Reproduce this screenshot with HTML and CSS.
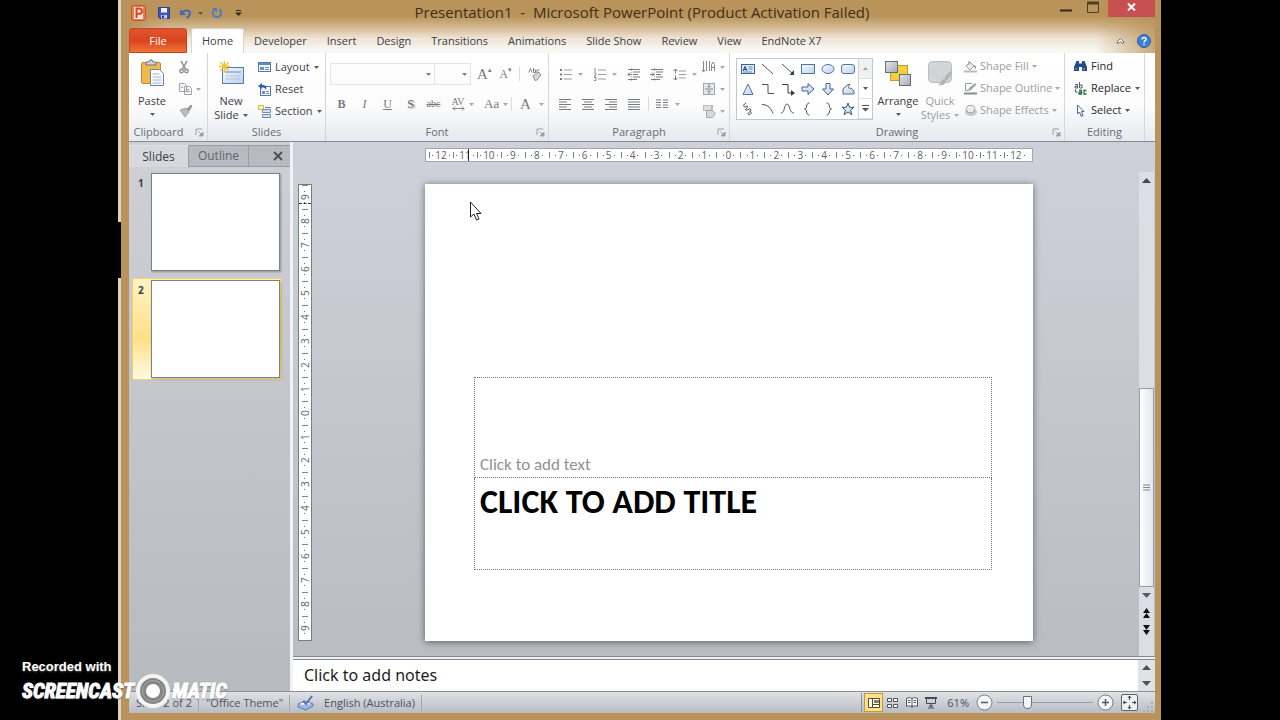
FILE: index.html
```html
<!DOCTYPE html>
<html lang="en">
<head>
<meta charset="utf-8">
<title>Presentation1 - Microsoft PowerPoint</title>
<link rel="stylesheet" href="styles.css">
</head>
<body>
<svg class="defs" aria-hidden="true">
  <defs>
    <linearGradient id="blue" x1="0" y1="0" x2="1" y2="1"><stop offset="0" stop-color="#f4f9fe"/><stop offset="1" stop-color="#bcd3ea"/></linearGradient>
    <linearGradient id="steel" x1="0" y1="0" x2="1" y2="1"><stop offset="0" stop-color="#e6e8ea"/><stop offset="1" stop-color="#a4a9b0"/></linearGradient>
    <symbol id="caret" viewBox="0 0 5 3"><path d="M0 0h5L2.500 3z" fill="currentColor"/></symbol>
    <symbol id="launch" viewBox="0 0 9 9"><path d="M1 7V1h6M3.500 3.500l3 3M8 4v4H4z" fill="none" stroke="#9aa0a8"/><path d="M8 4.500V8H4.500z" fill="#9aa0a8"/></symbol>
  </defs>
</svg>
<div class="desktop">
  <div class="window">
    <header class="chrome">
      <div class="titlebar">
        <div class="quick">
          <svg width="15" height="16" viewBox="0 0 15 16"><rect x=".5" y=".5" width="14" height="15" rx="2" fill="#ee7a50" stroke="#c9532c"/><rect x="3" y="2" width="9" height="12" fill="#fbe9df"/><path d="M5.500 13V3.500h2.800a2.600 2.600 0 0 1 0 5.300H5.500" fill="none" stroke="#d9461c" stroke-width="2"/></svg>
          <button class="plain save" aria-label="Save"><svg width="12" height="12" viewBox="0 0 12 12"><path d="M.5.5h11v11H2L.5 10z" fill="#4355b8" stroke="#303c8c"/><path d="M3 1h6v4.500H3z" fill="#eef1fb"/><path d="M3 8h6v3.500H3z" fill="#c7cdea"/><path d="M4 8.500h2V11H4z" fill="#2b3683"/></svg></button>
          <button class="plain undo" aria-label="Undo"><svg width="12" height="11" viewBox="0 0 12 11"><path d="M2 4.500C5 1.500 10 2 10 5.500c0 2-1.500 3.500-3.500 4.500" fill="none" stroke="#4169b8" stroke-width="2"/><path d="M0 1v6h6z" fill="#4169b8"/></svg><svg class="c" width="5" height="3"><use href="#caret"/></svg></button>
          <button class="plain redo" aria-label="Repeat"><svg width="12" height="12" viewBox="0 0 12 12"><path d="M3 3C1 5 1.500 8.500 4 9.700c3 1.300 6.500-.7 6.200-4C10 4 9 3 8 2.500" fill="none" stroke="#4b7cc9" stroke-width="2"/><path d="M1 1h5v5z" fill="#4b7cc9"/></svg></button>
          <button class="plain more" aria-label="Customize toolbar"><svg width="7" height="6" viewBox="0 0 7 6"><path d="M1 .5h5" stroke="#33291b"/><path d="M0 2.500h7L3.500 6z" fill="#33291b"/></svg></button>
        </div>
        <h1>Presentation1&nbsp; - &nbsp;Microsoft PowerPoint (Product Activation Failed)</h1>
        <div class="controls">
          <button class="plain" aria-label="Minimize"><svg width="12" height="12" viewBox="0 0 12 12"><path d="M0 9.500h12" stroke="#33291b" stroke-width="2"/></svg></button>
          <button class="plain" aria-label="Maximize"><svg width="12" height="12" viewBox="0 0 12 12"><path d="M.5 1v10.500h11V1" fill="none" stroke="#4d4125"/><path d="M0 2h12" stroke="#4d4125" stroke-width="3"/></svg></button>
          <button class="plain close" aria-label="Close"><svg width="9" height="8" viewBox="0 0 9 8"><path d="M1 .5l7 7M8 .5l-7 7" stroke="#fff" stroke-width="2"/></svg></button>
        </div>
      </div>
      <nav class="tabs">
        <button class="file">File</button>
        <button class="tab on">Home</button>
        <button class="tab">Developer</button>
        <button class="tab">Insert</button>
        <button class="tab">Design</button>
        <button class="tab">Transitions</button>
        <button class="tab">Animations</button>
        <button class="tab">Slide Show</button>
        <button class="tab">Review</button>
        <button class="tab">View</button>
        <button class="tab">EndNote X7</button>
        <div class="help">
          <button class="plain" aria-label="Minimize the ribbon"><svg width="9" height="7" viewBox="0 0 9 7"><path d="M1 5l3.500-3.500L8 5v1H6L4.500 4.500 3 6H1z" fill="#fff" stroke="#6b6a66"/></svg></button>
          <button class="plain" aria-label="Help"><svg width="14" height="14" viewBox="0 0 14 14"><circle cx="7" cy="7" r="6.500" fill="#3c7fd6" stroke="#2a5ca6"/><path d="M5 5.500C5 2.800 9.200 3 9 5.500 8.900 6.800 7 6.800 7 8.500M7 9.700v1.500" fill="none" stroke="#fff" stroke-width="1.500"/></svg></button>
        </div>
      </nav>
    </header>

    <div class="ribbon">
      <section class="group">
        <div class="body clip">
          <button class="big"><svg width="26" height="28" viewBox="0 0 26 28"><rect x="2.500" y="3.500" width="19" height="21" rx="1.500" fill="#f0b94d" stroke="#c48b2a"/><path d="M7 5V3h3l1-2h2l1 2h3v3H7z" fill="#d3d6da" stroke="#6c7178"/><path d="M11.500 10.500h9l4 4v12h-13z" fill="#fff" stroke="#6884b5"/><path d="M13.500 15h7M13.500 18h9M13.500 21h9M13.500 24h9" stroke="#9bb0d5"/></svg><span>Paste</span><svg class="c" width="5" height="3"><use href="#caret"/></svg></button>
          <div class="stack dim">
            <button class="plain" aria-label="Cut"><svg width="10" height="13" viewBox="0 0 10 13"><path d="M2 0l4.500 8M8 0L3.500 8" stroke="#898e94" stroke-width="1.500"/><circle cx="2.500" cy="10" r="1.700" fill="none" stroke="#898e94" stroke-width="1.400"/><circle cx="7.500" cy="10" r="1.700" fill="none" stroke="#898e94" stroke-width="1.400"/></svg></button>
            <button class="plain" aria-label="Copy"><svg width="13" height="12" viewBox="0 0 13 12"><path d="M.5.500h5l2 2v6h-7zM5.500 3.500h5l2 2v6h-7z" fill="#f3f4f5" stroke="#a1a5aa"/><path d="M7 6.500h3M7 8.500h4M2 4.500h2" stroke="#a1a5aa"/></svg><svg class="c" width="5" height="3"><use href="#caret"/></svg></button>
            <button class="plain" aria-label="Format Painter"><svg width="14" height="12" viewBox="0 0 14 12"><path d="M1 5l6-2 3 4-4 5z" fill="#b9bcc0" stroke="#a2a5aa"/><path d="M8 4l4-4 1 1-3 5z" fill="#96999e" stroke="#96999e"/></svg></button>
          </div>
        </div>
        <footer>Clipboard<svg width="9" height="9"><use href="#launch"/></svg></footer>
      </section>

      <section class="group">
        <div class="body">
          <button class="big"><svg width="26" height="28" viewBox="0 0 26 28"><rect x="4.500" y="8.500" width="21" height="16" fill="url(#blue)" stroke="#6079ad"/><rect x="7" y="12" width="16" height="2" fill="#a4b8da"/><path d="M8 17h14M8 20h14" stroke="#b5c5e0"/><path d="M6.500 2v11M1 7.500h11M2.500 3.500l8 8M10.500 3.500l-8 8" stroke="#edc734" stroke-width="1.600"/></svg><span>New</span><span>Slide <svg class="c" width="5" height="3"><use href="#caret"/></svg></span></button>
          <div class="list">
            <button class="line"><svg width="13" height="12" viewBox="0 0 13 12"><rect x=".5" y="1.500" width="12" height="9" fill="#f3f8fe" stroke="#5a77ac"/><rect x="1" y="2" width="11" height="2" fill="#5a8acb"/><path d="M2 6h4v3H2z" fill="#6e92c7"/><path d="M7 6.500h4M7 8.500h4" stroke="#6e92c7"/></svg>Layout <svg class="c" width="5" height="3"><use href="#caret"/></svg></button>
            <button class="line"><svg width="13" height="13" viewBox="0 0 13 13"><rect x="2.500" y="3.500" width="10" height="9" fill="#f3f8fe" stroke="#5a77ac"/><path d="M4 8h3v3H4z" fill="#6e92c7"/><path d="M8 8.500h3M8 10.500h3" stroke="#6e92c7"/><path d="M0 3l4-3v2c4 0 5 2 4 5C7.500 5 6 4.500 4 4.500V6z" fill="#2c60ae"/></svg>Reset</button>
            <button class="line"><svg width="13" height="14" viewBox="0 0 13 14"><path d="M.5 1.500h5v4h-5z" fill="#fff4b2" stroke="#dfb730"/><path d="M7 3.500h6" stroke="#6c7c98"/><path d="M4.500 5.500h8v3h-8zM4.500 10.500h8v3h-8z" fill="#d6e4f5" stroke="#7287ac"/></svg>Section <svg class="c" width="5" height="3"><use href="#caret"/></svg></button>
          </div>
        </div>
        <footer>Slides</footer>
      </section>

      <section class="group">
        <div class="body rows dim">
          <div class="row fontrow">
            <div class="combos">
              <label class="combo face"><select aria-label="Font"><option></option></select><svg class="c" width="5" height="3"><use href="#caret"/></svg></label>
              <label class="combo size"><select aria-label="Font size"><option></option></select><svg class="c" width="5" height="3"><use href="#caret"/></svg></label>
            </div>
            <button class="tool serif">A<sup>▴</sup></button>
            <button class="tool serif small">A<sup>▾</sup></button>
            <i class="sep"></i>
            <button class="tool" aria-label="Clear formatting"><svg width="14" height="14" viewBox="0 0 14 14"><path d="M1 5.500l1.500-4L4 5.500M5.500 1v4.500h2V3h-2M11.500 3H9v2.500h2.500" fill="none" stroke="#7f8388"/><path d="M5 9l5-4 3 3-4 5-2 .5z" fill="#d4d6d9" stroke="#8f9398"/></svg></button>
          </div>
          <div class="row">
            <button class="tool serif b">B</button>
            <button class="tool serif it">I</button>
            <button class="tool serif un">U</button>
            <button class="tool serif b sh">S</button>
            <button class="tool serif st">abc</button>
            <button class="tool split serif av"><span>AV</span><svg width="13" height="5" viewBox="0 0 13 5"><path d="M1 2.500h11M3 .5l-2 2 2 2M10 .5l2 2-2 2" fill="none" stroke="#888"/></svg><svg class="c" width="5" height="3"><use href="#caret"/></svg></button>
            <button class="tool split serif aa">Aa<svg class="c" width="5" height="3"><use href="#caret"/></svg></button>
            <i class="sep pull"></i>
            <button class="tool split serif big-a">A<svg class="c" width="5" height="3"><use href="#caret"/></svg></button>
          </div>
        </div>
        <footer>Font<svg width="9" height="9"><use href="#launch"/></svg></footer>
      </section>

      <section class="group">
        <div class="body dim">
          <div class="rows">
            <div class="row">
              <button class="tool split" aria-label="Bullets"><svg width="13" height="13" viewBox="0 0 13 13"><path d="M1 2h2M1 6.500h2M1 11h2" stroke="#777b80" stroke-width="2"/><path d="M5 2h8M5 6.500h8M5 11h8" stroke="#999da1"/></svg><svg class="c" width="5" height="3"><use href="#caret"/></svg></button>
              <button class="tool split" aria-label="Numbering"><svg width="13" height="13" viewBox="0 0 13 13"><path d="M2 0v4M1 5h2v1.500L1 8h2M1 9.500h2v3H1" fill="none" stroke="#888c90"/><path d="M5 2h8M5 6.500h8M5 11h8" stroke="#999da1"/></svg><svg class="c" width="5" height="3"><use href="#caret"/></svg></button>
              <button class="tool" aria-label="Decrease indent"><svg width="13" height="13" viewBox="0 0 13 13"><path d="M1 1.500h12M6 4h7M6 6.500h5M6 9h7M1 11.500h9" stroke="#777b80"/><path d="M4.500 0v13" stroke="#bbb" stroke-dasharray="1 1"/><path d="M5 6.500H1M3 4.500l-2 2 2 2" fill="none" stroke="#777b80"/></svg></button>
              <button class="tool" aria-label="Increase indent"><svg width="13" height="13" viewBox="0 0 13 13"><path d="M1 1.500h12M6 4h7M6 6.500h5M6 9h7M1 11.500h9" stroke="#777b80"/><path d="M4.500 0v13" stroke="#bbb" stroke-dasharray="1 1"/><path d="M0 6.500h4M2 4.500l2 2-2 2" fill="none" stroke="#777b80"/></svg></button>
              <button class="tool split" aria-label="Line spacing"><svg width="13" height="13" viewBox="0 0 13 13"><path d="M2.500 1v4.500M.5 3l2-2 2 2M2.500 7.500V12M.5 10l2 2 2-2" fill="none" stroke="#777b80"/><path d="M6 3h7M6 6.500h7M6 10h7" stroke="#999da1"/></svg><svg class="c" width="5" height="3"><use href="#caret"/></svg></button>
            </div>
            <div class="row">
              <button class="tool" aria-label="Align left"><svg width="13" height="11" viewBox="0 0 13 11"><path d="M0 .5h12M0 3h8M0 5.500h12M0 8h8M0 10.500h12" stroke="#777b80"/></svg></button>
              <button class="tool" aria-label="Center"><svg width="13" height="11" viewBox="0 0 13 11"><path d="M0 .5h12M2 3h8M0 5.500h12M2 8h8M0 10.500h12" stroke="#777b80"/></svg></button>
              <button class="tool" aria-label="Align right"><svg width="13" height="11" viewBox="0 0 13 11"><path d="M0 .5h12M4 3h8M0 5.500h12M4 8h8M0 10.500h12" stroke="#777b80"/></svg></button>
              <button class="tool" aria-label="Justify"><svg width="13" height="11" viewBox="0 0 13 11"><path d="M0 .5h12M0 3h12M0 5.500h12M0 8h12M0 10.500h12" stroke="#777b80"/></svg></button>
              <i class="sep"></i>
              <button class="tool split" aria-label="Columns"><svg width="13" height="11" viewBox="0 0 13 11"><path d="M0 1h5M0 3.500h5M0 6h5M0 8.500h5M7 1h5M7 3.500h5M7 6h5M7 8.500h5" stroke="#777b80"/></svg><svg class="c" width="5" height="3"><use href="#caret"/></svg></button>
            </div>
          </div>
          <div class="stack end">
            <button class="plain" aria-label="Text direction"><svg width="14" height="14" viewBox="0 0 14 14"><path d="M1.500 1v10M4.500 1v10M7.500 1v10" stroke="#85898e"/><path d="M0 10l1.500 2L3 10" fill="none" stroke="#85898e"/><path d="M9.500 11V4.500L11 2l1.500 2.500V11M9.500 7.500h3" fill="none" stroke="#85898e"/></svg><svg class="c" width="5" height="3"><use href="#caret"/></svg></button>
            <button class="plain" aria-label="Align text"><svg width="14" height="14" viewBox="0 0 14 14"><rect x="1.500" y="1.500" width="11" height="11" fill="#e4e5e7" stroke="#a4a7ab"/><path d="M3 7h8M7 2v3M5.500 4L7 5.500 8.500 4M7 12V9M5.500 10L7 8.500 8.500 10" fill="none" stroke="#85898e"/></svg><svg class="c" width="5" height="3"><use href="#caret"/></svg></button>
            <button class="plain" aria-label="Convert to SmartArt"><svg width="14" height="14" viewBox="0 0 14 14"><path d="M1 1h10v6H1z" fill="#b8bbbe"/><path d="M2 3h7M2 5h7" stroke="#fff"/><path d="M4.500 6.500h6l3 3-3 4h-6z" fill="#d6d8da" stroke="#a4a7ab"/></svg><svg class="c" width="5" height="3"><use href="#caret"/></svg></button>
          </div>
        </div>
        <footer>Paragraph<svg width="9" height="9"><use href="#launch"/></svg></footer>
      </section>

      <section class="group">
        <div class="body draw">
          <div class="gallery">
            <div class="shapes">
              <button class="plain" aria-label="Text box"><svg width="14" height="14" viewBox="0 0 14 14"><rect x=".5" y="2.500" width="13" height="9" fill="#dbe8f6" stroke="#40639c"/><path d="M2 9l2-4.500L6 9M3 7.500h2" fill="none" stroke="#24447c"/><path d="M7.500 5h4M7.500 7h4M2 10h9" stroke="#6f8dbd"/></svg></button>
              <button class="plain" aria-label="Line"><svg width="14" height="14" viewBox="0 0 14 14"><path d="M1 2l11 10" stroke="#4d5566"/></svg></button>
              <button class="plain" aria-label="Arrow"><svg width="14" height="14" viewBox="0 0 14 14"><path d="M1 2l10 9" stroke="#4d5566"/><path d="M13 13H8.500L13 8z" fill="#333b4a"/></svg></button>
              <button class="plain" aria-label="Rectangle"><svg width="14" height="14" viewBox="0 0 14 14"><rect x=".5" y="2.500" width="13" height="9" fill="url(#blue)" stroke="#5475a3"/></svg></button>
              <button class="plain" aria-label="Oval"><svg width="14" height="14" viewBox="0 0 14 14"><ellipse cx="7" cy="7" rx="6" ry="4.500" fill="url(#blue)" stroke="#5475a3"/></svg></button>
              <button class="plain" aria-label="Rounded rectangle"><svg width="14" height="14" viewBox="0 0 14 14"><rect x=".5" y="2.500" width="13" height="9" rx="2.500" fill="url(#blue)" stroke="#5475a3"/></svg></button>
              <button class="plain" aria-label="Triangle"><svg width="14" height="14" viewBox="0 0 14 14"><path d="M7 2l5 10.500H2z" fill="url(#blue)" stroke="#5475a3"/></svg></button>
              <button class="plain" aria-label="Elbow connector"><svg width="14" height="14" viewBox="0 0 14 14"><path d="M1 2.500h6v9h6" fill="none" stroke="#4d5566"/></svg></button>
              <button class="plain" aria-label="Elbow arrow"><svg width="14" height="14" viewBox="0 0 14 14"><path d="M1 2.500h6v8.500h4" fill="none" stroke="#333b4a"/><path d="M10 8l4 3-4 3z" fill="#333b4a"/></svg></button>
              <button class="plain" aria-label="Right arrow"><svg width="14" height="14" viewBox="0 0 14 14"><path d="M1 5h6V1.500L13 7l-6 5.500V9H1z" fill="url(#blue)" stroke="#43638f"/></svg></button>
              <button class="plain" aria-label="Down arrow"><svg width="14" height="14" viewBox="0 0 14 14"><path d="M5 1.500h4V7h3.500L7 13 1.500 7H5z" fill="url(#blue)" stroke="#43638f"/></svg></button>
              <button class="plain" aria-label="Freeform"><svg width="14" height="14" viewBox="0 0 14 14"><path d="M2 12V7l5-4.500h2C6 6 8 7 10 6l3 3v3z" fill="url(#blue)" stroke="#566b88"/></svg></button>
              <button class="plain" aria-label="Scribble"><svg width="14" height="14" viewBox="0 0 14 14"><path d="M5 1C1 3 3 6 5 4.500S7 5 5 7s2 1 3.500 0 2 2 0 3-2 3 0 2.500S11 10 9 9.500" fill="none" stroke="#3f495a"/></svg></button>
              <button class="plain" aria-label="Arc"><svg width="14" height="14" viewBox="0 0 14 14"><path d="M1 2.500c6 0 9 4 11 9" fill="none" stroke="#4d5566"/></svg></button>
              <button class="plain" aria-label="Curve"><svg width="14" height="14" viewBox="0 0 14 14"><path d="M0 11c4 0 3-9 6-9s2 9 7 9" fill="none" stroke="#4d5566"/></svg></button>
              <button class="plain" aria-label="Left brace"><svg width="14" height="14" viewBox="0 0 14 14"><path d="M8.500 1C4 1 7 7 3.500 7 7 7 4 13 8.500 13" fill="none" stroke="#4d5566"/></svg></button>
              <button class="plain" aria-label="Right brace"><svg width="14" height="14" viewBox="0 0 14 14"><path d="M5.500 1C10 1 7 7 10.500 7 7 7 10 13 5.500 13" fill="none" stroke="#4d5566"/></svg></button>
              <button class="plain" aria-label="Star"><svg width="14" height="14" viewBox="0 0 14 14"><path d="M7 1l1.600 4.300H13L9.600 8l1.300 4.700L7 10l-3.900 2.700L4.400 8 1 5.300h4.400z" fill="url(#blue)" stroke="#43536e"/></svg></button>
            </div>
            <div class="steps">
              <button class="off" aria-label="Row up"><svg width="5" height="3" viewBox="0 0 5 3"><path d="M0 3h5L2.500 0z" fill="#a0a4a8"/></svg></button>
              <button aria-label="Row down"><svg width="5" height="3"><use href="#caret"/></svg></button>
              <button aria-label="More shapes"><svg width="7" height="7" viewBox="0 0 7 7"><path d="M0 .5h7" stroke="#50575f"/><path d="M0 3h7L3.500 6.500z" fill="#50575f"/></svg></button>
            </div>
          </div>
          <button class="big"><svg width="28" height="28" viewBox="0 0 28 28"><rect x="6.500" y="6.500" width="17" height="15" fill="#f6cf3e" stroke="#c79a2a"/><rect x="1.500" y="2.500" width="12" height="11" fill="url(#steel)" stroke="#656d78"/><rect x="15.500" y="15.500" width="11" height="11" fill="url(#steel)" stroke="#656d78"/></svg><span>Arrange</span><svg class="c" width="5" height="3"><use href="#caret"/></svg></button>
          <button class="big dim"><svg width="26" height="28" viewBox="0 0 26 28"><rect x="1.500" y="2.500" width="23" height="21" rx="4" fill="#d2d4d6" stroke="#b9bbbe"/><path d="M25 11c-4 3-7 6-8 9l3 2c2-3 4-6 5-11zM16 20c-2 1-1 4-5 6 4 1 7 0 8-4z" fill="#b1b4b7"/></svg><span>Quick</span><span>Styles <svg class="c" width="5" height="3"><use href="#caret"/></svg></span></button>
          <div class="list dim">
            <button class="line"><svg width="13" height="13" viewBox="0 0 13 13"><path d="M2 6l4-4 4 4-4 4zM5 5V1" fill="#eceded" stroke="#969a9f"/><path d="M10 5c3 1 2 3 1.500 4.500C10.500 8 10 7 10 5z" fill="#969a9f"/><path d="M0 11.500h13" stroke="#b8babd" stroke-width="2"/></svg>Shape Fill <svg class="c" width="5" height="3"><use href="#caret"/></svg></button>
            <button class="line"><svg width="13" height="13" viewBox="0 0 13 13"><path d="M8 1.500H1.500v7H5" fill="none" stroke="#969a9f"/><path d="M4 9l1-3 6-5 1.500 1.500L7 8z" fill="#a2a5a9"/><path d="M0 11.500h13" stroke="#898d92" stroke-width="2"/></svg>Shape Outline <svg class="c" width="5" height="3"><use href="#caret"/></svg></button>
            <button class="line"><svg width="13" height="13" viewBox="0 0 13 13"><ellipse cx="7" cy="8" rx="6" ry="4" fill="#c6c8cb"/><path d="M4 1.500h5l2 3-2 4H4l-2-4z" fill="#eceded" stroke="#a7aaae"/></svg>Shape Effects <svg class="c" width="5" height="3"><use href="#caret"/></svg></button>
          </div>
        </div>
        <footer>Drawing<svg width="9" height="9"><use href="#launch"/></svg></footer>
      </section>

      <section class="group">
        <div class="body edit">
          <div class="list dark">
            <button class="line"><svg width="13" height="12" viewBox="0 0 13 12"><path d="M2.500 1h2.500v2.500h3V1h2.500L13 7v4H8V7H5v4H0V7z" fill="#26488c"/><path d="M2 8v2M10 8v2" stroke="#9fb9e6"/></svg>Find</button>
            <button class="line"><svg width="13" height="13" viewBox="0 0 13 13"><path d="M1 2.500h2.500V6H1V4.300h2.500M5.500 0v6H8V3H5.500" fill="none" stroke="#555b63"/><path d="M5 8.500h2.500V12H5v-1.700h2.500M12.500 8.500H10V12h2.500" fill="none" stroke="#26733e" stroke-width="1.300"/><path d="M1.500 7.500V10h2" fill="none" stroke="#2f57a3"/></svg>Replace <svg class="c" width="5" height="3"><use href="#caret"/></svg></button>
            <button class="line"><svg width="13" height="13" viewBox="0 0 13 13"><path d="M3.500 1v9l2-2 1.500 4h2L7.500 7.500H10z" fill="#fff" stroke="#4b6391"/></svg>Select <svg class="c" width="5" height="3"><use href="#caret"/></svg></button>
          </div>
        </div>
        <footer>Editing</footer>
      </section>
      <div class="rest"></div>
    </div>

    <main class="work">
      <aside class="pane">
        <div class="panetabs">
          <button class="on">Slides</button>
          <button>Outline</button>
          <button class="x" aria-label="Close pane"><svg width="10" height="10" viewBox="0 0 10 10"><path d="M1 1l8 8M9 1L1 9" stroke="#4c5158" stroke-width="2"/></svg></button>
        </div>
        <ol class="thumbs">
          <li><b>1</b><div class="thumb"></div></li>
          <li class="on"><b>2</b><div class="thumb"></div></li>
        </ol>
      </aside>
      <div class="right">
        <div class="canvas">
          <div class="hruler"><span>12</span><span>11</span><span>10</span><span>9</span><span>8</span><span>7</span><span>6</span><span>5</span><span>4</span><span>3</span><span>2</span><span>1</span><span>0</span><span>1</span><span>2</span><span>3</span><span>4</span><span>5</span><span>6</span><span>7</span><span>8</span><span>9</span><span>10</span><span>11</span><span>12</span><i class="mark"></i></div>
          <div class="vruler"><span>9</span><span>8</span><span>7</span><span>6</span><span>5</span><span>4</span><span>3</span><span>2</span><span>1</span><span>0</span><span>1</span><span>2</span><span>3</span><span>4</span><span>5</span><span>6</span><span>7</span><span>8</span><span>9</span><i class="vmark"></i></div>
          <article class="slide">
            <p class="ph text">Click to add text</p>
            <h2 class="ph title">CLICK TO ADD TITLE</h2>
            <svg class="pointer" width="12" height="20" viewBox="0 0 12 20"><path d="M.5 1v15l3.500-3 2.500 6 2.500-1-2.500-5.500H11z" fill="#fff" stroke="#222"/></svg>
          </article>
          <div class="scroll">
            <button aria-label="Scroll up"><svg width="9" height="5" viewBox="0 0 9 5"><path d="M0 5h9L4.500 0z" fill="#43484f"/></svg></button>
            <div class="track"><div class="grip"><svg width="7" height="7" viewBox="0 0 7 7"><path d="M0 1h7M0 3.500h7M0 6h7" stroke="#7f8792"/></svg></div></div>
            <button aria-label="Scroll down"><svg width="9" height="5" viewBox="0 0 9 5"><path d="M0 0h9L4.500 5z" fill="#565b63"/></svg></button>
            <button aria-label="Previous slide"><svg width="7" height="10" viewBox="0 0 7 10"><path d="M0 5h7L3.500 0zM0 10h7L3.500 5z" fill="#111"/></svg></button>
            <button aria-label="Next slide"><svg width="7" height="10" viewBox="0 0 7 10"><path d="M0 0h7L3.500 5zM0 5h7L3.500 10z" fill="#111"/></svg></button>
          </div>
        </div>
        <div class="notes">
          <p>Click to add notes</p>
          <div class="nscroll">
            <button aria-label="Notes up"><svg width="9" height="5" viewBox="0 0 9 5"><path d="M0 5h9L4.500 0z" fill="#43555c"/></svg></button>
            <button aria-label="Notes down"><svg width="9" height="5" viewBox="0 0 9 5"><path d="M0 0h9L4.500 5z" fill="#43555c"/></svg></button>
          </div>
        </div>
      </div>
    </main>

    <div class="status">
      <span class="cell">Slide 2 of 2</span>
      <span class="cell">"Office Theme"</span>
      <span class="cell lang"><svg width="18" height="16" viewBox="0 0 18 16"><path d="M1 9l7-3 8 3-7 4z" fill="#fff" stroke="#5a78b8"/><path d="M1 10v2l8 3 7-4V9" fill="#9fb6e2" stroke="#5a78b8"/><path d="M6 6l3 3 6-8" fill="none" stroke="#5c74ae" stroke-width="2"/></svg>English (Australia)</span>
      <div class="views">
        <button class="on" aria-label="Normal"><svg width="12" height="10" viewBox="0 0 12 10"><path d="M.5.500h11v9H.5zM4.500 1v8M5 6.500h6" fill="#fff" stroke="#5b4b20"/><path d="M6 2h5v3H6z" fill="#8d8257"/></svg></button>
        <button aria-label="Slide sorter"><svg width="11" height="10" viewBox="0 0 11 10"><path d="M.5.500h4v3h-4zM6.500.500h4v3h-4zM.5 6.500h4v3h-4zM6.500 6.500h4v3h-4z" fill="#fff" stroke="#4e545c"/></svg></button>
        <button aria-label="Reading view"><svg width="12" height="11" viewBox="0 0 12 11"><path d="M.5 1.500c2-1 4-1 5.500 0 1.500-1 3.500-1 5.500 0v8c-2-1-4-1-5.500 0-1.500-1-3.500-1-5.500 0zM6 1.500V11" fill="#fff" stroke="#4e545c"/><path d="M2 3.500h2.500M2 5.500h2.500M7.500 3.500H10M7.500 5.500H10" stroke="#4e545c"/></svg></button>
        <button aria-label="Slide show"><svg width="12" height="12" viewBox="0 0 12 12"><path d="M0 1h12" stroke="#444a52" stroke-width="2"/><path d="M1.500 2v4.500h9V2M6 6.500V10M3 11h6M4 9h4" fill="none" stroke="#444a52"/></svg></button>
      </div>
      <span class="pct">61%</span>
      <button class="plain" aria-label="Zoom out"><svg width="17" height="17" viewBox="0 0 17 17"><circle cx="8.500" cy="8.500" r="7.500" fill="#f4f5f6" stroke="#787e86"/><path d="M5 8.500h7" stroke="#555b63" stroke-width="1.500"/></svg></button>
      <input class="zoom" type="range" min="0" max="100" value="30" aria-label="Zoom">
      <button class="plain" aria-label="Zoom in"><svg width="17" height="17" viewBox="0 0 17 17"><circle cx="8.500" cy="8.500" r="7.500" fill="#f4f5f6" stroke="#787e86"/><path d="M5 8.500h7M8.500 5v7" stroke="#555b63" stroke-width="1.500"/></svg></button>
      <button class="plain fit" aria-label="Fit to window"><svg width="17" height="17" viewBox="0 0 17 17"><rect x=".5" y=".5" width="16" height="16" rx="1.500" fill="#eef0f2" stroke="#5d636b"/><path d="M8.500 2v4M7 4l1.500-2L10 4M8.500 15v-4M7 13l1.500 2 1.500-2M2 8.500h4M4 7L2 8.500 4 10M15 8.500h-4M13 7l2 1.500-2 1.500" fill="none" stroke="#444a52"/></svg></button>
      <svg class="grab" width="10" height="10" viewBox="0 0 10 10"><path d="M8 0h2v2H8zM8 4h2v2H8zM8 8h2v2H8zM4 4h2v2H4zM4 8h2v2H4zM0 8h2v2H0z" fill="#a9aeb5"/></svg>
    </div>
  </div>

  <div class="watermark">
    <p>Recorded with</p>
    <div class="brand"><span>SCREENCAST</span><svg width="36" height="36" viewBox="0 0 36 36"><circle cx="18" cy="18" r="15" fill="#858585" stroke="#f4f4f4" stroke-width="4"/><circle cx="18" cy="18" r="10.500" fill="none" stroke="#a6a6a6"/><circle cx="18" cy="18" r="7" fill="#fff"/></svg><span>MATIC</span></div>
  </div>
</div>
</body>
</html>
```

FILE: styles.css
```css
* { box-sizing: border-box; }

body {
  margin: 0;
  background: #000;
  color: #3b3f45;
  font: 11px/14px "Open Sans", "Noto Sans", sans-serif;
}

button {
  margin: 0;
  padding: 0;
  border: 0;
  background: none;
  color: inherit;
  font: inherit;
  white-space: nowrap;
}

svg { flex: none; display: block; }
h1, h2, p, ol { margin: 0; padding: 0; font-weight: normal; }
.defs { position: absolute; width: 0; height: 0; }

.desktop {
  position: relative;
  display: flex;
  min-height: 100vh;
  padding: 0 119px 0 118px;
}

.window {
  flex: 1;
  display: flex;
  flex-direction: column;
  min-width: 0;
  padding: 0 6px 7px 11px;
  background:
    linear-gradient(#000, #000) 0 222px / 3px 56px no-repeat,
    linear-gradient(#ddd3c8, #ddd3c8) 0 0 / 3px 100% no-repeat,
    #b9935a;
}

/* Title bar and tabs */
.chrome {
  background:
    linear-gradient(90deg, #b9935a, rgba(185, 147, 90, 0) 40px, rgba(185, 147, 90, 0) calc(100% - 60px), rgba(185, 147, 90, .8)),
    linear-gradient(#b9935a 16px, #d3b78f 27px, #eee3d4 38px, #faf7f4 50px);
}

.titlebar {
  display: grid;
  grid-template-columns: 1fr auto 1fr;
  height: 28px;
}

.titlebar h1 {
  font-size: 15px;
  line-height: 24px;
  color: #3e301b;
}

.quick { display: flex; align-items: center; height: 26px; padding-left: 2px; }
.quick .save { margin-left: 12px; }
.quick .undo { display: flex; align-items: center; gap: 6px; margin-left: 10px; color: #33291b; }
.quick .redo { margin-left: 8px; }
.quick .more { margin-left: 12px; }

.controls { display: flex; justify-content: flex-end; gap: 15px; height: 17px; }
.controls .plain { align-self: flex-start; padding-top: 1px; }
.controls .close {
  display: grid;
  place-items: center;
  align-self: stretch;
  width: 47px;
  margin-left: -6px;
  padding: 0 0 4px;
  background: #c75050;
}

.tabs { display: flex; align-items: stretch; height: 25px; }
.tabs .file {
  width: 58px;
  border: 1px solid #c54523;
  border-radius: 3px 3px 0 0;
  background: linear-gradient(#e2552f, #d9451f 50%, #f07337);
  color: #fff;
}
.tab { padding: 0 10px; }
.tab.on {
  margin-left: 4px;
  border: 1px solid #d9d4cc;
  border-bottom: 0;
  border-radius: 3px 3px 0 0;
  background: #fff;
}
.help { display: flex; align-items: center; gap: 12px; margin-left: auto; padding-right: 4px; }
.help button:first-child { margin-right: 0; }

/* Ribbon */
.ribbon {
  display: grid;
  grid-template-columns: 79fr 118fr 223fr 181fr 335fr 80fr 10fr;
  height: 89px;
  border-bottom: 1px solid #858b93;
  background: linear-gradient(#fff, #fcfcfd 60%, #e6e9ee);
}
.group {
  display: flex;
  flex-direction: column;
  min-width: 0;
  border-right: 1px solid #d3d7dd;
}
.group footer {
  position: relative;
  height: 16px;
  text-align: center;
  color: #666c75;
}
.clip + footer { padding-right: 19px; }
.group footer svg { position: absolute; right: 3px; top: 3px; }

.body { flex: 1; display: flex; min-height: 0; }
.c { color: #555b63; }
.dim { color: #9a9ea3; }
.dim .c { color: #a5a9ad; }

.big {
  display: flex;
  flex-direction: column;
  align-items: center;
  align-self: flex-start;
  width: 46px;
  padding-top: 6px;
}
.big > svg:first-child { margin-bottom: 7px; }
.big > .c { margin-top: 5px; }
.big span { display: flex; align-items: center; gap: 4px; }

.stack, .list {
  display: grid;
  grid-template-rows: repeat(3, 22px);
  align-content: start;
  align-items: center;
  padding-top: 3px;
}
.stack { justify-items: start; padding-left: 4px; }
.stack button { display: flex; align-items: center; gap: 4px; }
.stack.end { margin-left: auto; padding-right: 4px; }
.list { padding-left: 4px; }
.line { display: flex; align-items: center; gap: 4px; }
.dark { color: #24292f; }

.rows { display: flex; flex-direction: column; flex: 1; }
.row { display: flex; align-items: center; gap: 10px; height: 18px; padding-left: 10px; }
.rows .row:first-child { height: 42px; }
.rows.dim > .row { padding-left: 9px; }
.rows .row.fontrow { gap: 6px; padding-left: 4px; }
.combos { display: flex; }
.combo {
  position: relative;
  display: flex;
  align-items: center;
  height: 22px;
  border: 1px solid #e2e4e7;
  background: #fcfcfc;
}
.combo select {
  width: 100%;
  height: 20px;
  border: 0;
  appearance: none;
  background: none;
}
.combo .c { position: absolute; right: 3px; color: #7b8086; }
.face { width: 105px; }
.size { width: 36px; border-left: 0; }

.tool { display: flex; justify-content: center; align-items: center; width: 13px; }
.split { position: relative; justify-content: space-between; width: 24px; }
.sep { width: 1px; height: 14px; margin: 0 -3px; background: #d9dcdf; }
.fontrow .sep { margin: 0 2px 0 0; }
.sep.pull { margin: 0 -2px 0 -7px; }
.serif { font: 12px/14px "Liberation Serif", serif; color: #777b80; }
.b { font-weight: bold; }
.it { font-style: italic; }
.un { text-decoration: underline; }
.sh { text-shadow: 2px 1px 1px #bbb; }
.st { font-size: 10px; text-decoration: line-through; }
.aa { font-size: 13px; }
.big-a, .fontrow .serif { font-size: 15px; }
.fontrow .serif { width: 15px; }
.fontrow .small { font-size: 12px; }
.serif sup { font-size: 7px; line-height: 7px; align-self: flex-start; }
.av { display: grid; grid-template-columns: 16px 5px; align-items: center; justify-items: center; font-size: 10px; line-height: 9px; }
.av .c { grid-area: 1 / 2 / 3 / 3; }

.gallery {
  display: flex;
  align-self: flex-start;
  margin: 5px 4px 0 6px;
  border: 1px solid #c3c8cf;
  background: #fff;
}
.shapes { display: grid; grid-template-columns: repeat(6, 20px); grid-auto-rows: 20px; padding-left: 1px; }
.shapes button { display: grid; place-items: center; }
.steps { display: grid; grid-template-rows: repeat(3, 20px); width: 14px; border-left: 1px solid #d0d4d9; color: #50575f; }
.steps button { display: grid; place-items: center; border-bottom: 1px solid #dde0e4; }
.steps .off { background: #f0f1f3; }
.draw .big { width: 42px; }
.draw .list { padding: 2px 0 0 3px; }
.draw .line { gap: 3px; }
.edit .list { padding: 2px 0 0 9px; }

/* Work area */
.work { flex: 1; display: flex; min-height: 0; background: linear-gradient(#ced1d9, #b8bbc0); }
.pane {
  display: flex;
  flex-direction: column;
  width: 164px;
  padding-top: 3px;
  border-right: 3px solid #f1f3f6;
  background: linear-gradient(#ced0d5, #b7babe);
}
.panetabs { display: flex; height: 22px; font-size: 12px; color: #5f656e; }
.panetabs button {
  width: 60px;
  border: 1px solid #989da5;
  border-width: 1px 1px 1px 0;
  background: #b7bbc1;
}
.panetabs .on { border-bottom: 0; border-top-color: #dfe1e5; background: #d6d9de; color: #3c4148; }
.panetabs .x { flex: 1; display: grid; place-items: center; padding-left: 16px; border-right: 0; }
.thumbs { padding: 2px 8px 0 3px; list-style: none; }
.thumbs li { display: flex; padding: 4px 2px 3px 6px; }
.thumbs li b { width: 13px; padding-top: 3px; font-size: 10px; }
.thumbs .on {
  border: 1px solid #efd36a;
  border-radius: 2px;
  background: linear-gradient(#fff3c0, #fce08a 60%, #fffbe2);
  margin-top: 4px;
  padding: 1px 1px 1px 5px;
}
.thumb { flex: 1; aspect-ratio: 129 / 98; border: 1px solid #7d8085; background: #fff; box-shadow: 1px 1px 2px rgba(0, 0, 0, .3); }

.right { flex: 1; display: flex; flex-direction: column; min-width: 0; }
.canvas {
  flex: 1;
  display: grid;
  grid-template-columns: 14px 113fr 608fr 106fr 15px;
  grid-template-rows: 14px 22px 1fr;
  min-height: 0;
  padding: 6px 1px 15px 5px;
}
.hruler {
  grid-area: 1 / 3;
  position: relative;
  display: flex;
  padding: 0 4px 0 3px;
  border: 1px solid #a2a6ac;
  background: #fff;
}
.vruler {
  grid-area: 3 / 1;
  position: relative;
  display: flex;
  flex-direction: column;
  border: 1px solid #777b82;
  background: #fff;
}
.hruler span, .vruler span {
  flex: 1;
  display: flex;
  justify-content: center;
  align-items: center;
  gap: 2px;
  min-width: 0;
  min-height: 0;
  font-size: 10px;
  line-height: 12px;
  color: #5d6168;
  background: linear-gradient(#7d8188, #7d8188) 0 50% / 1px 6px no-repeat;
}
.hruler span::before, .hruler span::after, .vruler span::before, .vruler span::after {
  content: "";
  width: 1px;
  height: 1px;
  background: #5d6168;
}
.vruler span {
  writing-mode: vertical-rl;
  transform: rotate(180deg);
  background-position: 50% 100%;
  background-size: 6px 1px;
}
.mark { position: absolute; left: 7%; top: 0; width: 1px; height: 12px; background: #222; }
.vmark { position: absolute; left: 0; top: 4%; width: 12px; border-top: 1px dashed #333; }

.slide {
  grid-area: 3 / 3;
  position: relative;
  display: flex;
  flex-direction: column;
  padding: 193px 41px 71px 49px;
  background: #fff;
  box-shadow: 0 1px 7px rgba(0, 0, 0, .5);
}
.ph { border: 1px dotted #777; font-family: Carlito, Lato, sans-serif; }
.text { display: flex; align-items: flex-end; flex: 97; padding: 0 5px 2px; font-size: 17px; line-height: 20px; color: #919191; }
.title { flex: 83; margin-top: 0; padding: 4px 5px; border-top: 0; font-size: 34px; line-height: 40px; font-weight: bold; color: #000; }
.pointer { position: absolute; left: 45px; top: 17px; }

.scroll { grid-area: 3 / 5; display: flex; flex-direction: column; margin: -12px 0 -15px; background: #dcdee6; }
.scroll button { display: grid; place-items: center; height: 17px; }
.scroll button:last-child { margin-bottom: 18px; }
.track { flex: 1; display: flex; flex-direction: column; justify-content: flex-end; }
.grip { display: grid; place-items: center; height: 50%; border: 1px solid #989da7; background: linear-gradient(90deg, #fff, #e1e4ec); }

.notes { display: flex; min-height: 35px; border-top: 1px solid #84898f; background: #fff; box-shadow: inset 0 2px #f0f2f5, inset 0 3px #84898f; }
.notes p { flex: 1; padding: 8px 11px 4px; font: 16px/20px "Noto Sans", sans-serif; color: #1d1d1d; }
.nscroll { display: grid; width: 17px; margin-top: 3px; background: #dfe3e8; }
.nscroll button { display: grid; place-items: center; }

/* Status bar */
.status {
  display: flex;
  align-items: center;
  height: 22px;
  border-top: 1px solid #8b8f96;
  background: linear-gradient(#dfe1e5, #b9bdc4);
  color: #4d525a;
}
.cell { display: flex; align-items: center; padding: 0 6px 0 7px; border-right: 1px solid #a1a6ad; line-height: 16px; }
.lang { gap: 9px; }
.views { display: flex; align-items: center; margin-left: auto; padding-left: 2px; border-left: 1px solid #8f949c; }
.views button { display: grid; place-items: center; width: 19px; height: 19px; }
.views .on { border: 1px solid #c69a3a; background: #fbe08d; }
.pct { margin: 0 7px; }
.zoom {
  appearance: none;
  width: 96px;
  height: 14px;
  margin: 0 4px;
  background: linear-gradient(#979da5, #979da5) 0 50% / 100% 1px no-repeat;
}
.zoom::-webkit-slider-thumb {
  appearance: none;
  width: 9px;
  height: 13px;
  border: 1px solid #6b7179;
  border-radius: 1px 1px 5px 5px;
  background: #f4f5f6;
}
.fit { margin-left: 7px; }
.grab { align-self: flex-end; margin: 0 2px 1px 5px; }

/* Recorder badge over the lower left corner */
.watermark { position: absolute; left: 22px; bottom: 15px; color: #fff; text-shadow: 0 1px 2px #555; }
.watermark p { font: bold 13px/20px "Liberation Sans", sans-serif; }
.brand {
  display: flex;
  align-items: center;
  height: 28px;
  font: italic bold 21px/28px "Liberation Sans Narrow", "Roboto Condensed", sans-serif;
  -webkit-text-stroke: 1px #fff;
}
.brand svg { margin: 0 1px; }
```
